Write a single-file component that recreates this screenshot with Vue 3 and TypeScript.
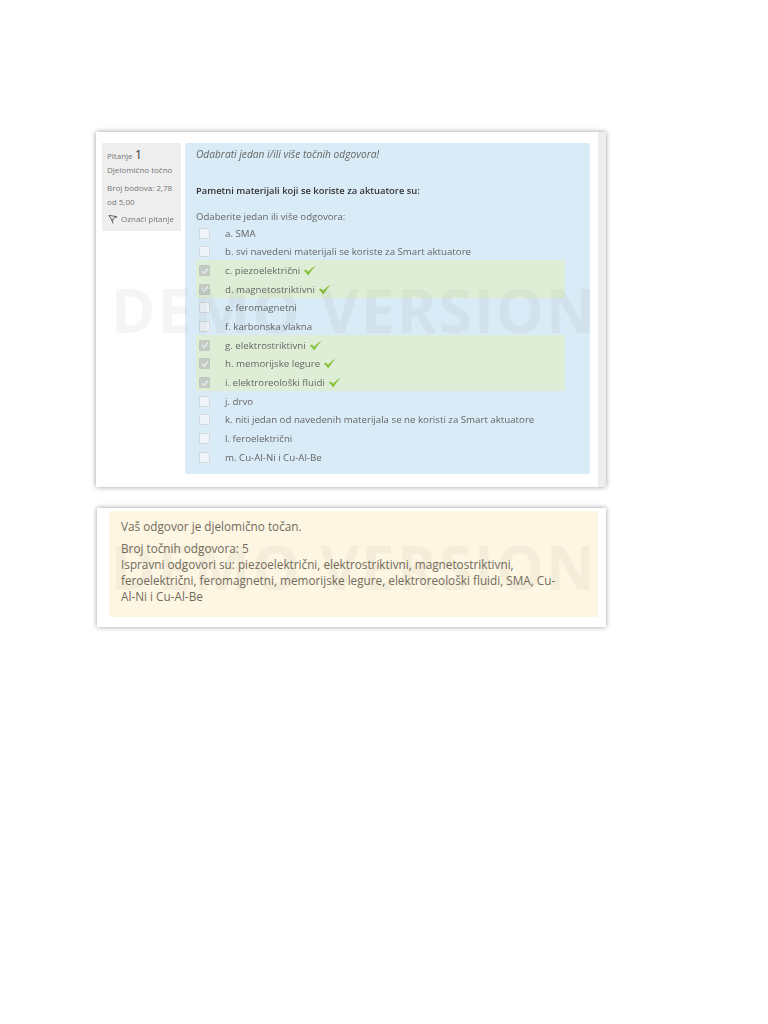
<script setup lang="ts">
interface Option { label: string; checked: boolean }
const options: Option[] = [
  { label: 'a. SMA', checked: false },
  { label: 'b. svi navedeni materijali se koriste za Smart aktuatore', checked: false },
  { label: 'c. piezoelektrični', checked: true },
  { label: 'd. magnetostriktivni', checked: true },
  { label: 'e. feromagnetni', checked: false },
  { label: 'f. karbonska vlakna', checked: false },
  { label: 'g. elektrostriktivni', checked: true },
  { label: 'h. memorijske legure', checked: true },
  { label: 'i. elektroreološki fluidi', checked: true },
  { label: 'j. drvo', checked: false },
  { label: 'k. niti jedan od navedenih materijala se ne koristi za Smart aktuatore', checked: false },
  { label: 'l. feroelektrični', checked: false },
  { label: 'm. Cu-Al-Ni i Cu-Al-Be', checked: false },
]
</script>

<template>
  <main class="page">
    <section class="card question">
      <aside class="info">
        <div class="num">Pitanje <b>1</b></div>
        <div class="state">Djelomično točno</div>
        <div class="grade">Broj bodova: 2,78 od 5,00</div>
        <div class="flag">
          <svg width="10" height="10" viewBox="0 0 11 11" aria-hidden="true">
            <path d="M1 1.5 L10 3 L5.8 4.8 L5 8 Z M3.8 5.4 L5.6 10.5" fill="none" stroke="#666" stroke-width="1.1" stroke-linejoin="round" />
          </svg>
          <span>Označi pitanje</span>
        </div>
      </aside>
      <div class="content">
        <p class="hint">Odabrati jedan i/ili više točnih odgovora!</p>
        <p class="prompt">Pametni materijali koji se koriste za aktuatore su:</p>
        <p class="choose">Odaberite jedan ili više odgovora:</p>
        <div class="options">
          <div v-for="o in options" :key="o.label" class="row" :class="{ right: o.checked }">
            <span class="box" :class="{ on: o.checked }">
              <svg v-if="o.checked" width="8" height="8" viewBox="0 0 8 8" aria-hidden="true">
                <path d="M1 4 L3.2 6.2 L7 1.5" fill="none" stroke="#e8ece8" stroke-width="1.3" />
              </svg>
            </span>
            <span class="label">{{ o.label }}</span>
            <svg v-if="o.checked" class="tick" width="13" height="11" viewBox="0 0 13 11" aria-hidden="true">
              <path d="M0.8 5.6 L3 4.4 L5 6.8 Q8 3 12.6 0.8 Q8.6 5 5.2 10.6 Q3.2 7.6 0.8 5.6 Z" fill="#86c03a" />
            </svg>
          </div>
        </div>
      </div>
      <div class="band"></div>
      <div class="watermark wm-one">DEMO VERSION</div>
    </section>

    <section class="card feedback">
      <div class="note">
        <p class="verdict">Vaš odgovor je djelomično točan.</p>
        <p class="answer">Broj točnih odgovora: 5<br />Ispravni odgovori su: piezoelektrični, elektrostriktivni, magnetostriktivni, feroelektrični, feromagnetni, memorijske legure, elektroreološki fluidi, SMA, Cu-Al-Ni i Cu-Al-Be</p>
      </div>
      <div class="watermark wm-two">DEMO VERSION</div>
    </section>
  </main>
</template>

<style>
html, body { background: #fff; }
</style>

<style scoped>
.page {
  width: 768px;
  height: 1024px;
  box-sizing: border-box;
  padding: 132px 0 0 96px;
  font-family: "Open Sans", "Noto Sans", sans-serif;
  color: #666;
  overflow: hidden;
  filter: blur(0.45px);
}
p { margin: 0; }

.card {
  position: relative;
  background: #fff;
  box-shadow: 0 0 5px rgba(0, 0, 0, 0.4);
}

.question {
  width: 510px;
  height: 355px;
  box-sizing: border-box;
  padding: 11px 0 13px 6px;
  display: flex;
}

.info {
  width: 79px;
  height: 88px;
  box-sizing: border-box;
  padding: 3px 5px;
  background: #eeeeee;
  font-size: 8px;
  line-height: 16px;
  color: #777;
}
.num { height: 16px; }
.num b { font-size: 13px; font-weight: 400; color: #444; }
.grade { margin-top: 3px; line-height: 13.5px; }
.flag { display: flex; align-items: center; gap: 3px; margin-top: 3px; padding-left: 1px; }

.content {
  width: 405px;
  margin-left: 4px;
  box-sizing: border-box;
  padding: 0 0 7px 11px;
  background: #d9ebf6;
  border-radius: 2px;
}
.hint { margin-top: 4px; font-size: 10.2px; line-height: 15px; font-style: italic; }
.prompt { margin-top: 21px; font-size: 9.4px; line-height: 15px; font-weight: 600; color: #333; }
.choose { margin-top: 13px; font-size: 9.6px; line-height: 12px; }

.row {
  display: flex;
  align-items: center;
  width: 369px;
  height: 18.67px;
  padding: 2px 0 0 3px;
  box-sizing: border-box;
  font-size: 9.7px;
}
.row.right { background: #deeed6; }
.box {
  flex: none;
  width: 9px;
  height: 9px;
  margin-right: 15px;
  display: flex;
  align-items: center;
  justify-content: center;
  background: #eef4f8;
  border: 1px solid #d2d8dc;
  border-radius: 1px;
}
.box.on { background: #c4cbc4; border-color: #c0c8c0; }
.label { white-space: nowrap; }
.tick { margin-left: 3px; flex: none; }

.band {
  width: 8px;
  margin: -11px 0 -13px 8px;
  background: #ededed;
}

.feedback {
  width: 509px;
  height: 119px;
  box-sizing: border-box;
  margin: 21px 0 0 1px;
  padding: 3px 8px 10px 12px;
}
.note {
  height: 106px;
  box-sizing: border-box;
  padding: 7px 38px 7px 12px;
  background: #fcf6e3;
  border-radius: 2px;
  font-size: 11.75px;
  line-height: 16px;
  color: #736b5c;
}
.answer { margin-top: 6px; }

.watermark {
  position: absolute;
  white-space: nowrap;
  font-size: 60px;
  line-height: 60px;
  font-weight: 700;
  letter-spacing: 2.2px;
  pointer-events: none;
}
.wm-one { left: 15px; top: 148px; color: rgba(90, 90, 90, 0.06); }
.wm-two { left: 14px; top: 29px; color: rgba(90, 80, 50, 0.05); }
</style>
